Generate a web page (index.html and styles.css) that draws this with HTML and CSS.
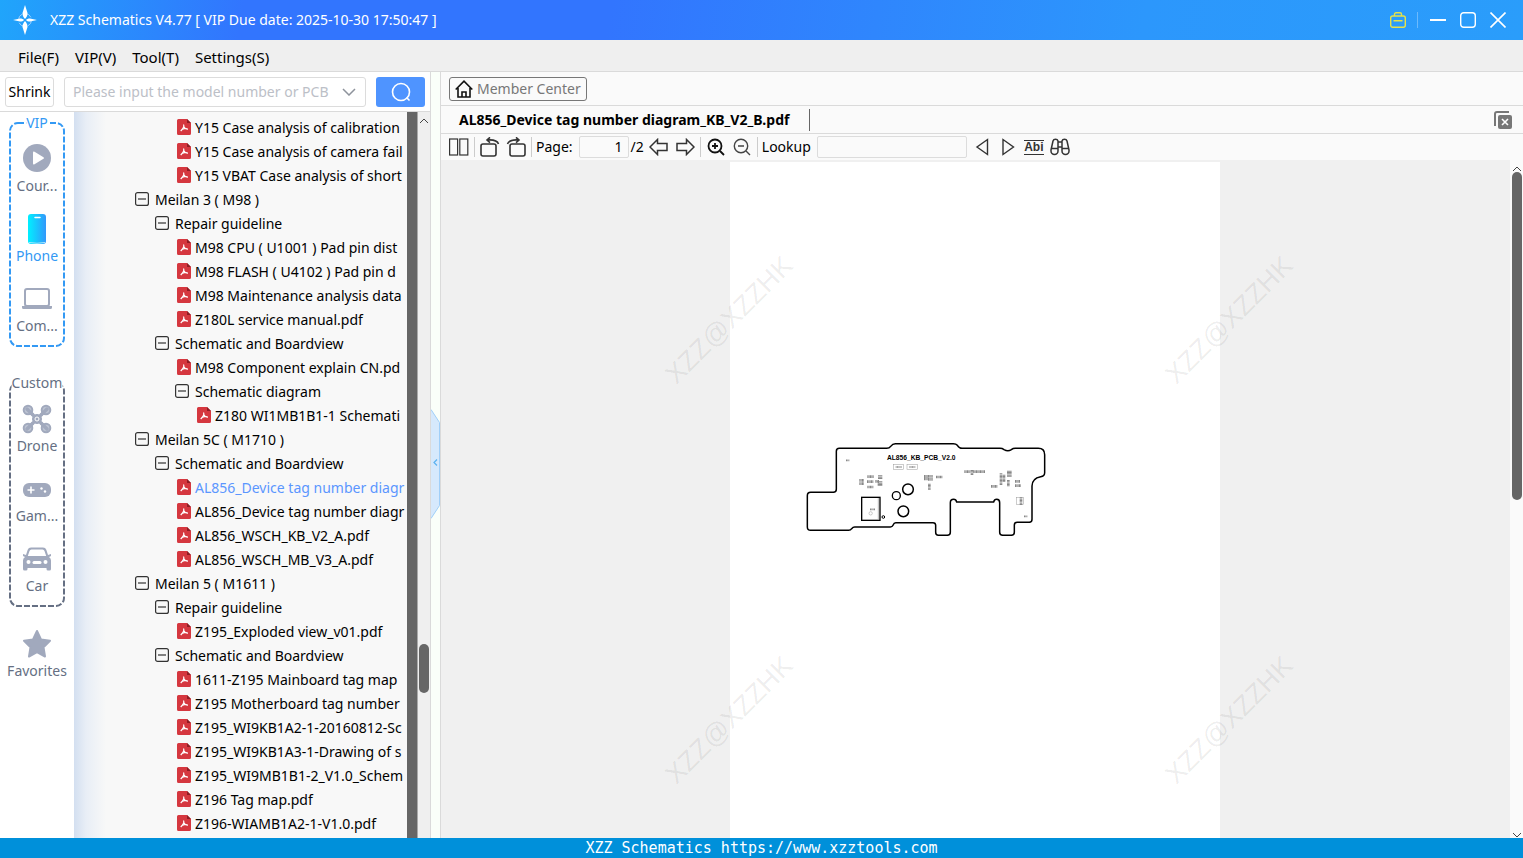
FILE: index.html
```html
<!DOCTYPE html>
<html lang="en">
<head>
  <meta charset="UTF-8">
  <meta name="viewport" content="width=device-width, initial-scale=1">
  <title>XZZ Schematics</title>
  <link rel="stylesheet" href="styles.css">
</head>
<body>
  <!-- Shared icons -->
  <svg class="defs" width="0" height="0" aria-hidden="true">
    <symbol id="pdf" viewBox="0 0 14 16">
      <path d="M1.5 0H10l4 4v10.5a1.5 1.5 0 0 1-1.5 1.5h-11A1.5 1.5 0 0 1 0 14.500v-13A1.500 1.500 0 0 1 1.500 0z" fill="#d5373f"/>
      <path d="M10 0l4 4h-4z" fill="#8e1d24"/>
      <path d="M6.500 5.500c1 2 .5 3.500-2.800 6.500M6.700 7.500c.6 1.600 1.800 2.600 4.300 2.600M5 10.500c1.500-.7 3-1 4.500-1" fill="none" stroke="#fff" stroke-width="1.200"/>
    </symbol>
    <symbol id="minus" viewBox="0 0 14 14">
      <rect x=".6" y=".6" width="12.800" height="12.800" rx="2" fill="none" stroke="#333" stroke-width="1.200"/>
      <path d="M3 7h8" stroke="#333" stroke-width="1.200"/>
    </symbol>
  </svg>

  <header class="titlebar">
    <svg class="logo" viewBox="0 0 24 30">
      <circle cx="12" cy="15" r="6.500" fill="none" stroke="#9cd0ff" stroke-width="1" stroke-dasharray="7 3"/>
      <path d="M12 0l2.500 8c0 3-1 4-2.500 6-1.500-2-2.500-3-2.500-6zM12 30l2.500-8c0-3-1-4-2.500-6-1.500 2-2.500 3-2.500 6zM0 15l7-1.500c2 0 3 .5 4 1.500-1 1-2 1.500-4 1.500zM24 15l-7-1.500c-2 0-3 .5-4 1.500 1 1 2 1.500 4 1.500z" fill="#fff"/>
    </svg>
    <span class="title">XZZ Schematics V4.77 [ VIP Due date: 2025-10-30 17:50:47 ]</span>
    <div class="window-buttons">
      <button type="button" class="vip-button" aria-label="VIP">
        <svg width="16" height="16" viewBox="0 0 16 16" fill="none" stroke="#e6e24a" stroke-width="1.400"><rect x=".7" y="4" width="14.600" height="11.300" rx="2"/><path d="M4.500 4V2.200A1.500 1.500 0 0 1 6 .7h4a1.500 1.500 0 0 1 1.500 1.500V4M3.500 8.700h9"/></svg>
      </button>
      <button type="button" aria-label="Minimize"><svg width="16" height="16" viewBox="0 0 16 16"><path d="M0 8h16" stroke="#fff" stroke-width="2"/></svg></button>
      <button type="button" aria-label="Maximize"><svg width="16" height="16" viewBox="0 0 16 16"><rect x=".7" y=".7" width="14.600" height="14.600" rx="3" fill="none" stroke="#fff" stroke-width="1.400"/></svg></button>
      <button type="button" aria-label="Close"><svg width="16" height="16" viewBox="0 0 16 16"><path d="M.5.5l15 15M15.500.5l-15 15" stroke="#fff" stroke-width="1.600"/></svg></button>
    </div>
  </header>

  <nav class="menubar">
    <button type="button">File(F)</button>
    <button type="button">VIP(V)</button>
    <button type="button">Tool(T)</button>
    <button type="button">Settings(S)</button>
  </nav>

  <div class="workspace">
    <aside class="left">
      <form class="search">
        <button type="button" class="shrink">Shrink</button>
        <div class="search-box">
          <input type="text" aria-label="Model number" placeholder="Please input the model number or PCB">
          <svg width="14" height="8" viewBox="0 0 14 8"><path d="M1 1l6 6 6-6" fill="none" stroke="#8e939c" stroke-width="1.500"/></svg>
        </div>
        <button type="submit" class="search-button" aria-label="Search">
          <svg width="20" height="20" viewBox="0 0 20 20" fill="none" stroke="#fff" stroke-width="1.600"><circle cx="10" cy="10" r="8.500"/><path d="M15.500 15.500l3 3"/></svg>
        </button>
      </form>

      <div class="left-body">
        <nav class="sidebar">
          <div class="group vip">
            <svg class="frame"><rect x="1" y="1" width="54" height="223" rx="8"/></svg>
            <span class="legend">VIP</span>
            <button type="button" class="item">
              <svg viewBox="0 0 32 32"><circle cx="16" cy="15" r="14" fill="#a1a9bd"/><path d="M12 9.500v11a1 1 0 0 0 1.500.8l9-5.500a1 1 0 0 0 0-1.600l-9-5.500a1 1 0 0 0-1.500.8z" fill="#fff"/></svg>
              <span>Cour...</span>
            </button>
            <button type="button" class="item active">
              <svg viewBox="0 0 32 32"><defs><linearGradient id="ph" x1="0" x2="1"><stop offset="0" stop-color="#00f0ff"/><stop offset="1" stop-color="#3298fb"/></linearGradient></defs><rect x="7" y="1" width="18" height="30" rx="3" fill="url(#ph)"/><path d="M14 4.500h5" stroke="#fff" stroke-width="1.500" stroke-linecap="round"/><path d="M8 29.500q8 1.500 16 0" stroke="#a9e9ff" fill="none"/></svg>
              <span>Phone</span>
            </button>
            <button type="button" class="item">
              <svg viewBox="0 0 32 32"><rect x="4" y="6" width="24" height="17" rx="2" fill="none" stroke="#a1a9bd" stroke-width="2"/><path d="M1 23h30v1.500a1.500 1.500 0 0 1-1.500 1.500h-27A1.500 1.500 0 0 1 1 24.500z" fill="#a1a9bd"/></svg>
              <span>Com...</span>
            </button>
          </div>

          <div class="group custom">
            <svg class="frame"><rect x="1" y="1" width="54" height="223" rx="8"/></svg>
            <span class="legend">Custom</span>
            <button type="button" class="item">
              <svg viewBox="0 0 32 32" fill="#a1a9bd" stroke="#a1a9bd"><path d="M7 7l18 18M25 7L7 25" stroke-width="3"/><circle cx="16" cy="16" r="4.500"/><g fill="#bcc3d2" stroke-width="2"><circle cx="7" cy="7" r="4.300"/><circle cx="25" cy="7" r="4.300"/><circle cx="7" cy="25" r="4.300"/><circle cx="25" cy="25" r="4.300"/></g><path d="M6 6l6 6M26 6l-6 6M6 26l6-6M26 26l-6-6" stroke-width="3.500" stroke-linecap="round"/><circle cx="16" cy="16" r="2" stroke="#fff" stroke-width="1"/></svg>
              <span>Drone</span>
            </button>
            <button type="button" class="item">
              <svg viewBox="0 0 32 32"><rect x="2" y="10" width="28" height="14" rx="6" fill="#a1a9bd"/><path d="M10 13.500v7M6.500 17h7" stroke="#fff" stroke-width="1.600"/><circle cx="20.500" cy="15.500" r="1.200" fill="#fff"/><circle cx="24" cy="18.500" r="1.200" fill="#fff"/></svg>
              <span>Gam...</span>
            </button>
            <button type="button" class="item">
              <svg viewBox="0 0 32 32"><path d="M10 4.500h12q2.500 0 3.300 2.300L27 12l3-1v2l-2 1q2 1 2 3.500V26a1.500 1.500 0 0 1-1.500 1.500H27a1.500 1.500 0 0 1-1.500-1.500v-1h-19v1A1.500 1.500 0 0 1 5 27.500H3.500A1.500 1.500 0 0 1 2 26v-8.500Q2 15 4 14l-2-1v-2l3 1 1.700-5.200Q7.500 4.500 10 4.500z" fill="#a1a9bd"/><path d="M10.500 6.500h11q1.500 0 2 1.500l1.700 5H6.800l1.700-5q.5-1.500 2-1.500z" fill="#fff"/><circle cx="7.500" cy="19" r="2" fill="#fff"/><circle cx="24.500" cy="19" r="2" fill="#fff"/><path d="M13 19.500h6" stroke="#fff" stroke-width="3" stroke-linecap="round"/></svg>
              <span>Car</span>
            </button>
          </div>

          <button type="button" class="item favorites">
            <svg viewBox="0 0 32 32"><path d="M16 3l4 8.500 9 1.300-6.500 6.400L24 28.500l-8-4.300-8 4.300 1.500-9.300L3 12.800l9-1.300z" fill="#a1a9bd" stroke="#a1a9bd" stroke-width="2" stroke-linejoin="round"/></svg>
            <span>Favorites</span>
          </button>
        </nav>

        <ul class="tree">
          <li class="l3"><svg class="pdf"><use href="#pdf"/></svg>Y15 Case analysis of calibration</li>
          <li class="l3"><svg class="pdf"><use href="#pdf"/></svg>Y15 Case analysis of camera fail</li>
          <li class="l3"><svg class="pdf"><use href="#pdf"/></svg>Y15 VBAT Case analysis of short</li>
          <li class="l1"><svg class="minus"><use href="#minus"/></svg>Meilan 3 ( M98 )</li>
          <li class="l2"><svg class="minus"><use href="#minus"/></svg>Repair guideline</li>
          <li class="l3"><svg class="pdf"><use href="#pdf"/></svg>M98 CPU ( U1001 ) Pad pin dist</li>
          <li class="l3"><svg class="pdf"><use href="#pdf"/></svg>M98 FLASH ( U4102 ) Pad pin d</li>
          <li class="l3"><svg class="pdf"><use href="#pdf"/></svg>M98 Maintenance analysis data</li>
          <li class="l3"><svg class="pdf"><use href="#pdf"/></svg>Z180L service manual.pdf</li>
          <li class="l2"><svg class="minus"><use href="#minus"/></svg>Schematic and Boardview</li>
          <li class="l3"><svg class="pdf"><use href="#pdf"/></svg>M98 Component explain CN.pd</li>
          <li class="l3"><svg class="minus"><use href="#minus"/></svg>Schematic diagram</li>
          <li class="l4"><svg class="pdf"><use href="#pdf"/></svg>Z180 WI1MB1B1-1 Schemati</li>
          <li class="l1"><svg class="minus"><use href="#minus"/></svg>Meilan 5C ( M1710 )</li>
          <li class="l2"><svg class="minus"><use href="#minus"/></svg>Schematic and Boardview</li>
          <li class="l3 selected"><svg class="pdf"><use href="#pdf"/></svg>AL856_Device tag number diagr</li>
          <li class="l3"><svg class="pdf"><use href="#pdf"/></svg>AL856_Device tag number diagr</li>
          <li class="l3"><svg class="pdf"><use href="#pdf"/></svg>AL856_WSCH_KB_V2_A.pdf</li>
          <li class="l3"><svg class="pdf"><use href="#pdf"/></svg>AL856_WSCH_MB_V3_A.pdf</li>
          <li class="l1"><svg class="minus"><use href="#minus"/></svg>Meilan 5 ( M1611 )</li>
          <li class="l2"><svg class="minus"><use href="#minus"/></svg>Repair guideline</li>
          <li class="l3"><svg class="pdf"><use href="#pdf"/></svg>Z195_Exploded view_v01.pdf</li>
          <li class="l2"><svg class="minus"><use href="#minus"/></svg>Schematic and Boardview</li>
          <li class="l3"><svg class="pdf"><use href="#pdf"/></svg>1611-Z195 Mainboard tag map</li>
          <li class="l3"><svg class="pdf"><use href="#pdf"/></svg>Z195 Motherboard tag number</li>
          <li class="l3"><svg class="pdf"><use href="#pdf"/></svg>Z195_WI9KB1A2-1-20160812-Sc</li>
          <li class="l3"><svg class="pdf"><use href="#pdf"/></svg>Z195_WI9KB1A3-1-Drawing of s</li>
          <li class="l3"><svg class="pdf"><use href="#pdf"/></svg>Z195_WI9MB1B1-2_V1.0_Schem</li>
          <li class="l3"><svg class="pdf"><use href="#pdf"/></svg>Z196 Tag map.pdf</li>
          <li class="l3"><svg class="pdf"><use href="#pdf"/></svg>Z196-WIAMB1A2-1-V1.0.pdf</li>
        </ul>
        <div class="tree-edge"></div>
        <div class="tree-scroll">
          <svg width="10" height="6" viewBox="0 0 10 6"><path d="M1 5l4-4 4 4" fill="none" stroke="#444"/></svg>
          <div class="thumb"></div>
        </div>
      </div>
    </aside>

    <div class="splitter">
      <button type="button" aria-label="Collapse">
        <svg width="9" height="110" viewBox="0 0 9 110"><path d="M0 .5l8.500 13v83L0 109.500z" fill="#d6e9fc"/><path d="M0 .5l8.500 13v83L0 109.500" fill="none" stroke="#a0cff8"/><path d="M6 50.500L3 53.500l3 3" fill="none" stroke="#5bb2f0" stroke-width="1.200"/></svg>
      </button>
    </div>

    <main class="viewer">
      <div class="member-row">
        <button type="button" class="member">
          <svg width="18" height="18" viewBox="0 0 18 18" fill="none" stroke="#111" stroke-width="1.600"><path d="M.7 9.500L9 1.200l8.300 8.300M3 8v9h12V8M7 17v-5h4v5"/></svg>
          Member Center
        </button>
      </div>
      <div class="tabs">
        <div class="tab">AL856_Device tag number diagram_KB_V2_B.pdf</div>
        <button type="button" class="close-all" aria-label="Close all tabs">
          <svg width="18" height="18" viewBox="0 0 18 18"><path d="M1 15V3a2 2 0 0 1 2-2h12" fill="none" stroke="#777" stroke-width="2"/><rect x="4" y="4" width="14" height="14" rx="2" fill="#777"/><path d="M8 8l6 6M14 8l-6 6" stroke="#fff" stroke-width="1.600"/></svg>
        </button>
      </div>
      <div class="toolbar">
        <button type="button" aria-label="Two pages"><svg width="20" height="18" viewBox="0 0 20 18" fill="none" stroke="#333" stroke-width="1.200"><rect x=".6" y="1" width="8" height="16"/><rect x="10.800" y="1" width="8" height="16"/></svg></button>
        <i class="sep"></i>
        <button type="button" aria-label="Rotate left"><svg width="20" height="20" viewBox="0 0 20 20" fill="none" stroke="#333" stroke-width="1.600"><rect x="1" y="7" width="15" height="12" rx="2"/><path d="M18.500 7c-1-3-4-4.500-11-4M10 .3L7 3l3 2.700"/></svg></button>
        <button type="button" aria-label="Rotate right"><svg width="20" height="20" viewBox="0 0 20 20" fill="none" stroke="#333" stroke-width="1.600"><rect x="4" y="7" width="15" height="12" rx="2"/><path d="M1.500 7c1-3 4-4.500 11-4M10 .3L13 3l-3 2.700"/></svg></button>
        <i class="sep"></i>
        <label for="page">Page:</label>
        <input type="text" id="page" class="page-input" value="1">
        <span class="count">/2</span>
        <button type="button" aria-label="Previous page"><svg width="20" height="18" viewBox="0 0 20 18" fill="none" stroke="#333" stroke-width="1.500"><path d="M1 9l7.500-7.500v4H18v7H8.500v4z"/></svg></button>
        <button type="button" aria-label="Next page"><svg width="20" height="18" viewBox="0 0 20 18" fill="none" stroke="#333" stroke-width="1.500"><path d="M19 9l-7.500-7.500v4H2v7h9.500v4z"/></svg></button>
        <i class="sep"></i>
        <button type="button" aria-label="Zoom in"><svg width="18" height="18" viewBox="0 0 18 18" fill="none" stroke="#111" stroke-width="1.800"><circle cx="8" cy="8" r="6.500"/><path d="M13 13l4 4M8 5v6M5 8h6"/></svg></button>
        <button type="button" aria-label="Zoom out"><svg width="18" height="18" viewBox="0 0 18 18" fill="none" stroke="#444" stroke-width="1.400"><circle cx="8" cy="8" r="6.700"/><path d="M13 13l4 4M5 8h6"/></svg></button>
        <i class="sep"></i>
        <label for="lookup">Lookup</label>
        <input type="text" id="lookup" class="lookup-input">
        <button type="button" aria-label="Find previous"><svg width="14" height="18" viewBox="0 0 14 18"><path d="M12.500 1.500v15L2 9z" fill="none" stroke="#333" stroke-width="1.400"/></svg></button>
        <button type="button" aria-label="Find next"><svg width="14" height="18" viewBox="0 0 14 18"><path d="M2 1.500v15L12.500 9z" fill="none" stroke="#333" stroke-width="1.400"/></svg></button>
        <button type="button"><span class="abi">Abi</span></button>
        <button type="button" aria-label="Find"><svg width="20" height="18" viewBox="0 0 20 18" fill="none" stroke="#333" stroke-width="1.500"><path d="M1 12L3 3q.5-1.700 2.500-1.700T8 3v10a3.500 3.500 0 0 1-7 0zM19 12L17 3q-.5-1.700-2.500-1.700T12 3v10a3.500 3.500 0 0 0 7 0zM8 4h4M8 9h4M1.500 10.500h6M12.500 10.500h6"/></svg></button>
      </div>

      <div class="canvas">
        <div class="page">
          <svg class="board" viewBox="0 0 810 360" fill="none" stroke="#000">
            <path stroke-width="4.500" stroke-linejoin="round" d="M148 55H290q8 0 12-6 6-8 14-8H490q8 0 12 5 6 9 14 9H630q7 0 12 4 12 7 22 0 5-4 12-4H745q19 0 19 19v54q0 10-12 12-26 5-26 28V268q0 9-8 9H682q-9 0-9 8v22q0 9-9 9H638q-9 0-9-9V218q0-10-9-10-7 0-9 8H500q-2-8-9-8-10 0-10 10v89q0 9-9 9H445q-8 0-8-9V286q0-8-8-8H317q-5 0-8 8-2 5-8 5H194q-5 0-9 5-3 5-9 5H62q-10 0-10-10V197q0-10 10-10h68q9 0 9-9V64q0-9 9-9z"/>
            <rect x="215" y="202" width="55" height="69" stroke-width="4"/>
            <path d="M265 204v65" stroke="#999" stroke-width="2"/>
            <circle cx="354" cy="178" r="16" stroke-width="4.500"/>
            <circle cx="319" cy="197" r="12" stroke-width="4"/>
            <circle cx="340" cy="244" r="16" stroke-width="4.500"/>
            <circle cx="280" cy="261" r="4" stroke-width="3"/>
            <g stroke="#999" stroke-width="1.500">
              <rect x="310" y="103" width="31" height="15"/><rect x="351" y="103" width="32" height="15"/>
              <rect x="679" y="202" width="22" height="21"/><circle cx="242" cy="250" r="5"/>
            </g>
            <!-- component outlines -->
            <g stroke="#888" stroke-width="8" stroke-dasharray="3 1">
              <path d="M232 140h20M231 155h20M232 171h18M208 151h14M208 161h14M256 154h12M268 136v12M273 136v12M267 154v14M273 154v14M438 141h20M402 139h12M402 147h12M414 139h14M414 148h14M418 161v18M523 125h18M546 120v16M550 125h36M603 169h20M633 130v36M642 134v22M655 122v18M661 122v18M655 150v20M675 154h16M675 167h18M693 202v24"/>
              <path d="M317 111h18M358 111h18M168 91h10M702 259h10M240 238h15" stroke-width="5"/>
            </g>
            <text x="291" y="90" class="board-name">AL856_KB_PCB_V2.0</text>
          </svg>
        </div>
        <span class="watermark w1">XZZ@XZZHK</span>
        <span class="watermark w2">XZZ@XZZHK</span>
        <span class="watermark w3">XZZ@XZZHK</span>
        <span class="watermark w4">XZZ@XZZHK</span>
        <div class="page-scroll">
          <svg width="10" height="6" viewBox="0 0 10 6"><path d="M1 5l4-4 4 4" fill="none" stroke="#444"/></svg>
          <div class="thumb"></div>
          <svg class="down" width="10" height="6" viewBox="0 0 10 6"><path d="M1 1l4 4 4-4" fill="none" stroke="#444"/></svg>
        </div>
      </div>
    </main>
  </div>

  <footer>XZZ Schematics https://www.xzztools.com</footer>
</body>
</html>
```
FILE: styles.css
```css
* {
  box-sizing: border-box;
}
body {
  margin: 0;
  height: 100vh;
  display: flex;
  flex-direction: column;
  overflow: hidden;
  font-family: "Noto Sans", "Open Sans", sans-serif;
  font-size: 14px;
  line-height: 22px;
  color: #000;
}
button {
  border: none;
  background: none;
  padding: 0;
  font: inherit;
  color: inherit;
  cursor: pointer;
}
button svg {
  display: block;
}
input {
  font: inherit;
  min-width: 0;
}
.defs {
  position: absolute;
}

/* Title bar and menu */
.titlebar {
  height: 40px;
  flex: none;
  display: flex;
  align-items: center;
  padding: 0 17px 0 13px;
  background: linear-gradient(100deg, #20a5fb 0, #3275fe 16%, #3275fe 40%, #2c97fc 75%, #2a9dfb 100%);
  color: #fff;
}
.logo {
  width: 24px;
  height: 30px;
  margin-right: 13px;
}
.window-buttons {
  margin-left: auto;
  display: flex;
  gap: 14px;
}
.vip-button {
  padding-right: 11px;
  margin-right: -2px;
  border-right: 1px solid #6cbafd;
}
.menubar {
  height: 32px;
  flex: none;
  display: flex;
  align-items: center;
  gap: 16px;
  padding: 2px 0 0 18px;
  background: #efefef;
  border-bottom: 1px solid #dadada;
  font-size: 15px;
}
.workspace {
  flex: 1;
  min-height: 0;
  display: flex;
}

/* Left panel */
.left {
  width: 431px;
  flex: none;
  display: flex;
  flex-direction: column;
  border-right: 1px solid #dadada;
}
.search {
  height: 40px;
  flex: none;
  display: flex;
  align-items: center;
  gap: 10px;
  padding: 0 5px;
  border-bottom: 1px solid #dadada;
}
.shrink {
  width: 49px;
  height: 30px;
  border: 1px solid #dcdcdc;
  border-radius: 3px;
}
.search-box {
  flex: 1;
  height: 30px;
  display: flex;
  align-items: center;
  padding: 0 9px 0 8px;
  border: 1px solid #dcdcdc;
  border-radius: 3px;
}
.search-box input {
  flex: 1;
  padding: 0;
  border: none;
  outline: none;
}
.search-box input::placeholder {
  color: #bcc0c7;
}
.search-button {
  width: 49px;
  height: 30px;
  display: flex;
  align-items: center;
  justify-content: center;
  background: #4f94ff;
  border-radius: 3px;
}
.left-body {
  flex: 1;
  min-height: 0;
  display: flex;
}
.sidebar {
  width: 74px;
  flex: none;
  display: flex;
  flex-direction: column;
  align-items: center;
  padding-top: 10px;
  color: #656f83;
}
.group {
  position: relative;
  width: 56px;
  padding-top: 16px;
  margin-bottom: 34px;
}
.frame {
  position: absolute;
  top: 0;
  left: 0;
  width: 56px;
  height: 225px;
  pointer-events: none;
}
.frame rect {
  fill: none;
  stroke: #656f83;
  stroke-width: 2;
  stroke-dasharray: 6 2;
}
.vip .frame rect {
  stroke: #3399f4;
}
.legend {
  position: absolute;
  top: -10px;
  left: 50%;
  transform: translateX(-50%);
  background: #fff;
}
.vip .legend, .item.active {
  color: #3399f4;
}
.item {
  width: 100%;
  height: 70px;
  display: flex;
  flex-direction: column;
  align-items: center;
  padding-top: 5px;
}
.item svg {
  width: 32px;
  height: 32px;
}
.favorites {
  margin-top: -19px;
}

/* File tree */
.tree {
  flex: 1;
  min-width: 0;
  margin: 0;
  padding: 4px 0 0;
  list-style: none;
  overflow: hidden;
  background: linear-gradient(90deg, #d3dff0 0, #e8eef6 12px, #f8f8f8 32px);
}
.tree li {
  height: 24px;
  display: flex;
  align-items: center;
  white-space: nowrap;
}
.tree svg {
  flex: none;
  width: 14px;
  height: 14px;
  margin: 0 6px 2px 0;
}
.tree svg.pdf {
  height: 16px;
  margin: 0 4px 2px 2px;
}
.l1 {
  padding-left: 61px;
}
.l2 {
  padding-left: 81px;
}
.l3 {
  padding-left: 101px;
}
.l4 {
  padding-left: 121px;
}
.selected {
  color: #5b96ff;
}
.tree-edge {
  width: 11px;
  background: #666;
  border-right: 1px solid #aaa;
}
.tree-scroll {
  width: 12px;
  display: flex;
  flex-direction: column;
  align-items: center;
  padding-top: 6px;
  background: #efefef;
}
.thumb {
  width: 10px;
  border-radius: 5px;
  background: #666;
}
.tree-scroll .thumb {
  height: 49px;
  margin-top: 520px;
}
.splitter {
  width: 10px;
  flex: none;
  padding-top: 337px;
  background: #fafff9;
  border-right: 1px solid #dadada;
}

/* Viewer */
.viewer {
  flex: 1;
  min-width: 0;
  display: flex;
  flex-direction: column;
  background: #fafafa;
}
.member-row {
  height: 34px;
  flex: none;
  display: flex;
  align-items: center;
  padding-left: 8px;
  border-bottom: 1px solid #dadada;
}
.member {
  height: 24px;
  display: flex;
  align-items: center;
  gap: 4px;
  padding: 0 5px;
  border: 1px solid #777;
  border-radius: 3px;
  color: #777;
}
.tabs {
  height: 28px;
  flex: none;
  display: flex;
  align-items: center;
  padding-right: 11px;
  border-bottom: 1px solid #dadada;
}
.tab {
  padding: 0 20px 0 18px;
  border-right: 1px solid #666;
  font-weight: bold;
}
.close-all {
  margin-left: auto;
}
.toolbar {
  height: 26px;
  flex: none;
  display: flex;
  align-items: center;
  gap: 4px;
  padding-left: 7px;
}
.toolbar button {
  width: 22px;
  display: flex;
  justify-content: center;
}
.toolbar label {
  padding-right: 2px;
}
.sep {
  width: 1px;
  height: 20px;
  background: #ccc;
}
.toolbar input {
  height: 22px;
  padding: 0 5px;
  border: 1px solid #dcdcdc;
  border-radius: 2px;
  background: #fafafa;
}
.page-input {
  width: 50px;
  text-align: right;
}
.count {
  margin-left: -2px;
}
.lookup-input {
  width: 150px;
}
.abi {
  border-top: 1px solid #333;
  border-bottom: 1px solid #333;
  font: bold 12px/13px "Liberation Sans", sans-serif;
  color: #333;
}
.canvas {
  flex: 1;
  min-height: 0;
  position: relative;
  display: flex;
  justify-content: center;
  padding: 2px 14px 0 0;
  overflow: hidden;
  background: #f0f0f0;
}
.page {
  width: 490px;
  padding: 268px 0 0 60px;
  background: #fff;
}
.board {
  display: block;
  width: 270px;
  height: 120px;
}
.board-name {
  font: bold 20px "Liberation Sans", sans-serif;
  fill: #000;
  stroke: none;
}
.watermark {
  position: absolute;
  width: 180px;
  margin: -16px 0 0 -90px;
  text-align: center;
  font: 27px/32px "Liberation Sans", sans-serif;
  color: rgba(0, 0, 0, 0.08);
  transform: rotate(-45deg);
}
.w1, .w3 {
  left: 288px;
}
.w2, .w4 {
  left: 788px;
}
.w1, .w2 {
  top: 160px;
}
.w3, .w4 {
  top: 560px;
}
.page-scroll {
  position: absolute;
  top: 0;
  right: 0;
  bottom: 0;
  width: 13px;
  display: flex;
  flex-direction: column;
  align-items: center;
  padding-top: 6px;
  background: #fafafa;
}
.page-scroll .thumb {
  height: 328px;
}
.page-scroll .down {
  margin-top: auto;
}
footer {
  height: 20px;
  flex: none;
  background: #0090da;
  color: #fff;
  text-align: center;
  font: 15px/21px "DejaVu Sans Mono", monospace;
}
```
